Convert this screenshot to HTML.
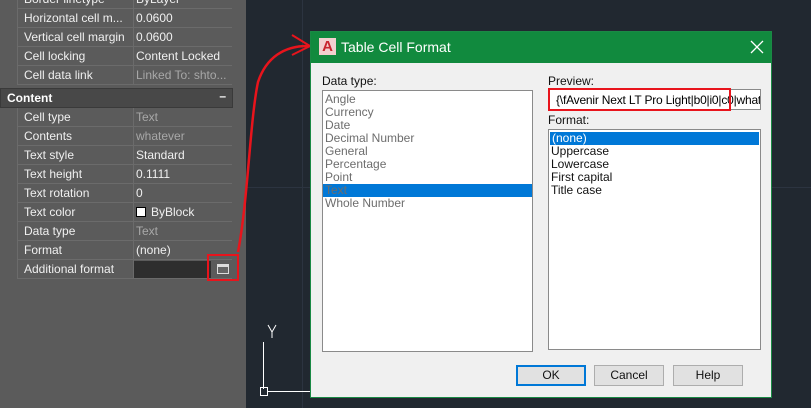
<!DOCTYPE html>
<html><head><meta charset="utf-8"><style>
*{margin:0;padding:0;box-sizing:border-box}
body{width:811px;height:408px;overflow:hidden;background:#212830;font-family:"Liberation Sans",sans-serif;position:relative}
.abs{position:absolute}
#panel{left:0;top:0;width:246px;height:408px;background:#5b5b5b}
.row{position:absolute;left:17px;width:215px;height:19px;border-bottom:1px solid #6b6b6b;border-left:1px solid #6b6b6b;font-size:12px;color:#f0f0f0;background:#5b5b5b}
.row .k{position:absolute;left:6px;top:2px}
.row .v{position:absolute;left:118px;top:2px}
.row .sep{position:absolute;left:115px;top:0;width:1px;height:19px;background:#6b6b6b}
.dim{color:#a8a8a8}
.dlg{left:310px;top:31px;width:462px;height:367px;background:#f0f0f0;border:1px solid #1a8a45}
.title{left:0;top:0;width:460px;height:31px;background:#118a3e;color:#fff;font-size:14px}
.lbl{font-size:12px;color:#111}
.list{background:#fff;border:1px solid #8a8a8a;font-size:12px}
.list div{height:13px;line-height:13px;padding-left:2px}
.btn{top:333px;width:70px;height:21px;border:1px solid #adadad;background:#e1e1e1;font-size:12px;text-align:center;line-height:19px;color:#111}
</style></head><body>
<div class="abs" style="left:302px;top:0;width:1px;height:408px;background:#2c3440"></div>
<div class="abs" style="left:0;top:187px;width:811px;height:1px;background:#2c3440"></div>
<div id="panel" class="abs"></div>
<div class="row" style="top:-10px"><span class="k">Border linetype</span><span class="sep"></span><span class="v">ByLayer</span></div>
<div class="row" style="top:9px"><span class="k">Horizontal cell m...</span><span class="sep"></span><span class="v">0.0600</span></div>
<div class="row" style="top:28px"><span class="k">Vertical cell margin</span><span class="sep"></span><span class="v">0.0600</span></div>
<div class="row" style="top:47px"><span class="k">Cell locking</span><span class="sep"></span><span class="v">Content Locked</span></div>
<div class="row" style="top:66px"><span class="k">Cell data link</span><span class="sep"></span><span class="v dim">Linked To: shto...</span></div>
<div class="abs" style="left:0;top:88px;width:233px;height:20px;background:#484848;border:1px solid #3a3a3a;color:#fff;font-size:12px;font-weight:bold;padding:2px 6px">Content<span style="position:absolute;right:6px;top:0">–</span></div>
<div class="row" style="top:108px"><span class="k">Cell type</span><span class="sep"></span><span class="v dim">Text</span></div>
<div class="row" style="top:127px"><span class="k">Contents</span><span class="sep"></span><span class="v dim">whatever</span></div>
<div class="row" style="top:146px"><span class="k">Text style</span><span class="sep"></span><span class="v">Standard</span></div>
<div class="row" style="top:165px"><span class="k">Text height</span><span class="sep"></span><span class="v">0.1111</span></div>
<div class="row" style="top:184px"><span class="k">Text rotation</span><span class="sep"></span><span class="v">0</span></div>
<div class="row" style="top:203px"><span class="k">Text color</span><span class="sep"></span><span class="v"><span style="display:inline-block;width:10px;height:10px;background:#fff;border:1px solid #000;vertical-align:-1px;margin-right:5px"></span>ByBlock</span></div>
<div class="row" style="top:222px"><span class="k">Data type</span><span class="sep"></span><span class="v dim">Text</span></div>
<div class="row" style="top:241px"><span class="k">Format</span><span class="sep"></span><span class="v">(none)</span></div>
<div class="row" style="top:260px"><span class="k">Additional format</span><span class="sep"></span></div>
<div class="abs" style="left:134px;top:261px;width:77px;height:17px;background:#2e2e2e"></div>
<div class="abs" style="left:217px;top:264px;width:12px;height:10px;border:1px solid #ddd;border-top-width:3px;background:#666"></div>
<svg class="abs" style="left:0;top:0" width="811" height="408">
<rect x="208" y="255" width="30" height="25" fill="none" stroke="#e8141c" stroke-width="2"/>
<path d="M238,252 C248,200 250,120 258,82 C266,58 284,45 310,46" fill="none" stroke="#e8141c" stroke-width="2.5"/>
<path d="M292,35 L310,46 L292,55" fill="none" stroke="#e8141c" stroke-width="2"/>
<path d="M268,325 L272,332 L276,325 M272,332 L272,338" stroke="#fff" fill="none" stroke-width="1"/>
<path d="M263.5,342 V389 M268,391.5 H310" stroke="#fff" fill="none"/>
<rect x="260.5" y="387.5" width="7" height="8" fill="none" stroke="#fff"/>
</svg>
<div class="abs dlg">
 <div class="abs title"><span class="abs" style="left:8px;top:6px;width:17px;height:17px;background:#f3d0cf;color:#c8262e;font-weight:bold;font-size:15px;text-align:center;line-height:17px">A</span><span class="abs" style="left:30px;top:7px">Table Cell Format</span>
 <svg class="abs" style="left:439px;top:8px" width="14" height="14"><path d="M1,1 L13,13 M13,1 L1,13" stroke="#fff" stroke-width="1.3"/></svg></div>
 <div class="abs lbl" style="left:11px;top:42px">Data type:</div>
 <div class="abs list" style="left:11px;top:58px;width:211px;height:262px;color:#6d6d6d;padding-top:2px">
  <div>Angle</div><div>Currency</div><div>Date</div><div>Decimal Number</div><div>General</div><div>Percentage</div><div>Point</div><div style="background:#0078d7;color:#6d6d6d">Text</div><div>Whole Number</div>
 </div>
 <div class="abs lbl" style="left:237px;top:42px">Preview:</div>
 <div class="abs" style="left:237px;top:57px;width:213px;height:21px;background:#fff;border:1px solid #8a8a8a;font-size:12px;padding:3px 0 0 7px;white-space:nowrap;overflow:hidden;letter-spacing:-0.2px">{\fAvenir Next LT Pro Light|b0|i0|c0|whatever</div>
 <div class="abs" style="left:237px;top:56px;width:183px;height:23px;border:2px solid #e8141c"></div>
 <div class="abs lbl" style="left:237px;top:81px">Format:</div>
 <div class="abs list" style="left:237px;top:97px;width:213px;height:221px;color:#111;padding-top:2px">
  <div style="background:#0078d7;color:#fff;margin:0 1px">(none)</div><div>Uppercase</div><div>Lowercase</div><div>First capital</div><div>Title case</div>
 </div>
 <div class="abs btn" style="left:205px;border:2px solid #0078d7;line-height:17px">OK</div>
 <div class="abs btn" style="left:283px">Cancel</div>
 <div class="abs btn" style="left:362px">Help</div>
</div>
</body></html>
